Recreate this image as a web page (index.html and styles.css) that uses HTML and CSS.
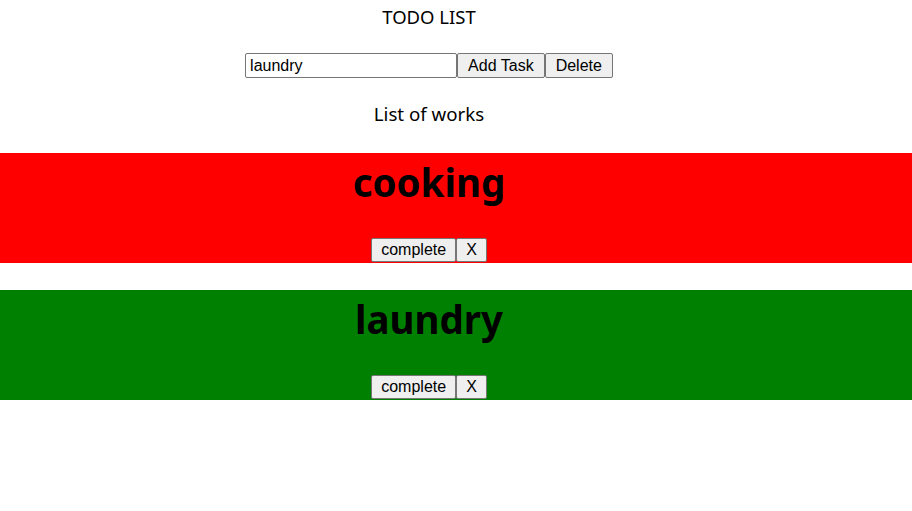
FILE: index.html
```html
<!DOCTYPE html>
<html>
<head>
<meta charset="utf-8">
<link rel="stylesheet" href="styles.css">
</head>
<body>
<div class="page">
  <div class="head">
    <div class="title">TODO LIST</div>
    <div class="form"><input class="field" type="text" value="laundry"><button class="btn">Add Task</button><button class="btn">Delete</button></div>
    <div class="subtitle">List of works</div>
  </div>
  <div class="task red">
    <h1 class="name">cooking</h1>
    <div class="actions"><button class="btn small">complete</button><button class="btn small">X</button></div>
  </div>
  <div class="task green">
    <h1 class="name">laundry</h1>
    <div class="actions"><button class="btn small">complete</button><button class="btn small">X</button></div>
  </div>
</div>
</body>
</html>
```
FILE: styles.css
```css
html, body { margin: 0; padding: 0; background: #fff; }
.page { font-family: "Segoe UI", "Noto Sans", sans-serif; color: #000; }
.head { width: 858px; text-align: center; }
.title { font-size: 18.5px; line-height: 24px; padding-top: 5px; }
.form { margin-top: 24px; height: 25px; display: flex; justify-content: center; }
.field { box-sizing: border-box; width: 212px; height: 25px; margin: 0; padding: 1px 4px; border: 1px solid #767676; border-radius: 2px; font-family: "Liberation Sans", Arial, sans-serif; font-size: 16px; color: #000; }
.btn { box-sizing: border-box; height: 25px; margin: 0; padding: 1px 10px; border: 1px solid #767676; border-radius: 2px; background: #efefef; font-family: "Liberation Sans", Arial, sans-serif; font-size: 16px; color: #000; }
.subtitle { font-size: 18.7px; line-height: 24px; margin-top: 24px; }
.task { height: 110px; margin-top: 27px; }
.red { background: #ff0000; }
.green { background: #008000; }
.name { width: 858px; margin: 0; padding-top: 4px; text-align: center; font-size: 38.5px; font-weight: 700; line-height: 50px; }
.actions { width: 858px; display: flex; justify-content: center; margin-top: 31px; }
.small { height: 24px; padding: 0 9px; }
```
